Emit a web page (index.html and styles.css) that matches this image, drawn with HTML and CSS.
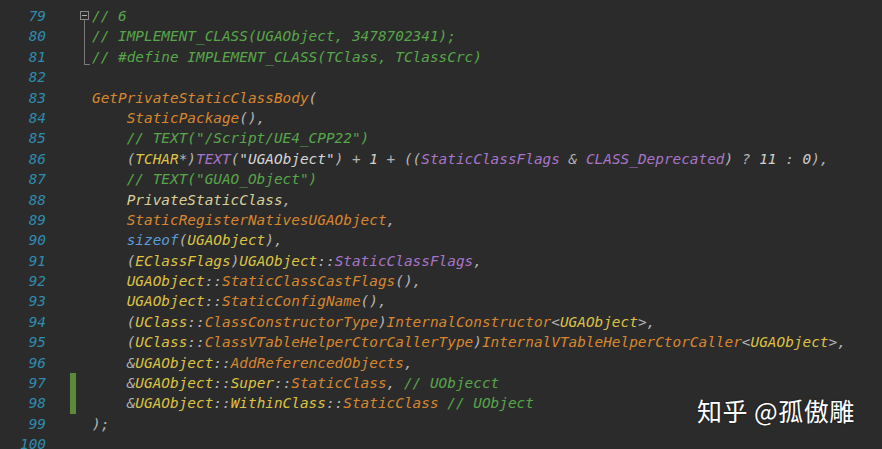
FILE: index.html
```html
<!DOCTYPE html>
<html lang="en">
<head>
    <meta charset="UTF-8">
    <title>UGAObject.gen.cpp</title>
    <link rel="stylesheet" href="styles.css">
</head>
<body>
    <div class="editor">
        <div class="line"><span class="num">79</span><span class="mark fold-start"></span><span class="code"><span class="cm">// 6</span></span></div>
        <div class="line"><span class="num">80</span><span class="mark fold-mid"></span><span class="code"><span class="cm">// IMPLEMENT_CLASS(UGAObject, 3478702341);</span></span></div>
        <div class="line"><span class="num">81</span><span class="mark fold-end"></span><span class="code"><span class="cm">// #define IMPLEMENT_CLASS(TClass, TClassCrc)</span></span></div>
        <div class="line"><span class="num">82</span><span class="mark"></span><span class="code"></span></div>
        <div class="line"><span class="num">83</span><span class="mark"></span><span class="code"><span class="fn">GetPrivateStaticClassBody</span>(</span></div>
        <div class="line"><span class="num">84</span><span class="mark"></span><span class="code">    <span class="fn">StaticPackage</span>(),</span></div>
        <div class="line"><span class="num">85</span><span class="mark"></span><span class="code">    <span class="cm">// TEXT("/Script/UE4_CPP22")</span></span></div>
        <div class="line"><span class="num">86</span><span class="mark"></span><span class="code">    (<span class="ty">TCHAR</span>*)<span class="mc">TEXT</span>(<span class="str">"UGAObject"</span>) + <span class="nu">1</span> + ((<span class="mc">StaticClassFlags</span> &amp; <span class="mc">CLASS_Deprecated</span>) ? <span class="nu">11</span> : <span class="nu">0</span>),</span></div>
        <div class="line"><span class="num">87</span><span class="mark"></span><span class="code">    <span class="cm">// TEXT("GUAO_Object")</span></span></div>
        <div class="line"><span class="num">88</span><span class="mark"></span><span class="code">    <span class="var">PrivateStaticClass</span>,</span></div>
        <div class="line"><span class="num">89</span><span class="mark"></span><span class="code">    <span class="fn">StaticRegisterNativesUGAObject</span>,</span></div>
        <div class="line"><span class="num">90</span><span class="mark"></span><span class="code">    <span class="kw">sizeof</span>(<span class="ty">UGAObject</span>),</span></div>
        <div class="line"><span class="num">91</span><span class="mark"></span><span class="code">    (<span class="ty">EClassFlags</span>)<span class="ty">UGAObject</span>::<span class="mc">StaticClassFlags</span>,</span></div>
        <div class="line"><span class="num">92</span><span class="mark"></span><span class="code">    <span class="ty">UGAObject</span>::<span class="fn">StaticClassCastFlags</span>(),</span></div>
        <div class="line"><span class="num">93</span><span class="mark"></span><span class="code">    <span class="ty">UGAObject</span>::<span class="fn">StaticConfigName</span>(),</span></div>
        <div class="line"><span class="num">94</span><span class="mark"></span><span class="code">    (<span class="ty">UClass</span>::<span class="fn">ClassConstructorType</span>)<span class="fn">InternalConstructor</span>&lt;<span class="ty">UGAObject</span>&gt;,</span></div>
        <div class="line"><span class="num">95</span><span class="mark"></span><span class="code">    (<span class="ty">UClass</span>::<span class="fn">ClassVTableHelperCtorCallerType</span>)<span class="fn">InternalVTableHelperCtorCaller</span>&lt;<span class="ty">UGAObject</span>&gt;,</span></div>
        <div class="line"><span class="num">96</span><span class="mark"></span><span class="code">    &amp;<span class="ty">UGAObject</span>::<span class="fn">AddReferencedObjects</span>,</span></div>
        <div class="line"><span class="num">97</span><span class="mark changed"></span><span class="code">    &amp;<span class="ty">UGAObject</span>::<span class="ty">Super</span>::<span class="fn">StaticClass</span>, <span class="cm">// UObjecct</span></span></div>
        <div class="line"><span class="num">98</span><span class="mark changed"></span><span class="code">    &amp;<span class="ty">UGAObject</span>::<span class="ty">WithinClass</span>::<span class="fn">StaticClass</span> <span class="cm">// UObject</span></span></div>
        <div class="line"><span class="num">99</span><span class="mark"></span><span class="code">);</span></div>
        <div class="line"><span class="num">100</span><span class="mark"></span><span class="code"></span></div>
    </div>

    <div class="watermark">知乎 @孤傲雕</div>
</body>
</html>
```

FILE: styles.css
```css
html, body {
    margin: 0;
    height: 100%;
    background-color: #2b2b2b;
    overflow: hidden;
}
.editor {
    padding-top: 6px;
    font-family: "DejaVu Sans Mono", "Liberation Mono", monospace;
    font-size: 14.4px;
    font-style: italic;
    color: #b4b4b4;
}
.line {
    display: flex;
    height: 20.4px;
    line-height: 20.4px;
    white-space: pre;
}
.num {
    width: 46px;
    text-align: right;
    color: #2f8caf;
    flex-shrink: 0;
}
.mark {
    width: 46px;
    flex-shrink: 0;
    position: relative;
}
.code {
    flex: 1;
}

/* fold marker and change bar */
.fold-start::before {
    content: "";
    position: absolute;
    left: 34px;
    top: 5px;
    width: 9px;
    height: 9px;
    border: 1px solid #8a8a8a;
    box-sizing: border-box;
    background: linear-gradient(#b0b0b0, #b0b0b0) center / 5px 1px no-repeat;
}
.fold-start::after {
    content: "";
    position: absolute;
    left: 38px;
    top: 14px;
    bottom: 0;
    border-left: 1px solid #7a7a7a;
}
.fold-mid::before {
    content: "";
    position: absolute;
    left: 38px;
    top: 0;
    bottom: 0;
    border-left: 1px solid #7a7a7a;
}
.fold-end::before {
    content: "";
    position: absolute;
    left: 38px;
    top: 0;
    height: 17px;
    width: 5px;
    border-left: 1px solid #7a7a7a;
    border-bottom: 1px solid #7a7a7a;
}
.changed::before {
    content: "";
    position: absolute;
    left: 24px;
    top: 0;
    bottom: 0;
    width: 6px;
    background-color: #5d8a3a;
}

/* syntax colours */
.cm { color: #57a64a; }
.fn { color: #d7862f; }
.ty { color: #dcc244; }
.mc { color: #a874c8; }
.kw { color: #5c9bd6; }
.var { color: #d6cf9a; }
.str { color: #d6d6d6; }
.nu { color: #d0d0d0; }

.watermark {
    position: absolute;
    left: 697px;
    top: 392px;
    font-family: "Noto Sans CJK SC", sans-serif;
    font-size: 25px;
    color: #ffffff;
    letter-spacing: 0.5px;
    text-shadow: 0 0 2px rgba(0, 0, 0, 0.6);
}
```
